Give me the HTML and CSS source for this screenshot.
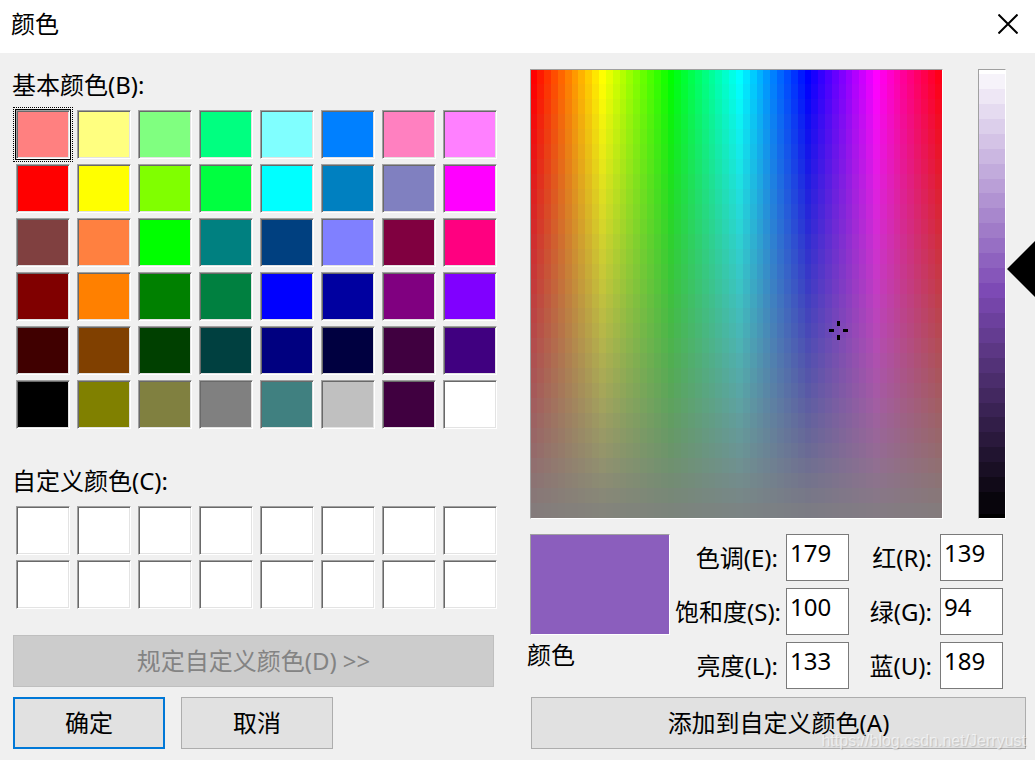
FILE: index.html
```
<!DOCTYPE html>
<html lang="zh-CN">
<head>
    <meta charset="UTF-8">
    <meta name="viewport" content="width=device-width, initial-scale=1.0">
    <title>颜色</title>
    <link rel="stylesheet" href="styles.css">
</head>
<body>

    <!-- Title bar -->
    <header class="titlebar">
        <h1 class="title">颜色</h1>
        <button type="button" class="close" aria-label="关闭">
            <svg width="20" height="20" viewBox="0 0 20 20"><path d="M0.5 0.5 L19.5 19.5 M19.5 0.5 L0.5 19.5"/></svg>
        </button>
    </header>

    <form class="dialog" onsubmit="return false">

        <!-- Left: swatches -->
        <div class="palette">
            <h2 class="caption" id="basicLabel">基本颜色(B):</h2>
            <div class="swatches" id="basicColors" role="group" aria-labelledby="basicLabel"></div>

            <h2 class="caption custom" id="customLabel">自定义颜色(C):</h2>
            <div class="swatches" id="customColors" role="group" aria-labelledby="customLabel"></div>

            <button type="button" class="btn define" disabled>规定自定义颜色(D) &gt;&gt;</button>
            <div class="actions">
                <button type="submit" class="btn primary">确定</button>
                <button type="button" class="btn">取消</button>
            </div>
        </div>

        <!-- Right: spectrum and values -->
        <div class="mixer">
            <div class="picker">
                <div class="spectrum sunken">
                    <canvas id="spectrum"></canvas>
                    <svg class="cross" width="19" height="19" viewBox="0 0 19 19"><path d="M0 8h5v3H0z M14 8h5v3h-5z M8 0h3v5H8z M8 14h3v5H8z"/></svg>
                </div>
                <div class="luminance sunken"><canvas id="luminance"></canvas></div>
                <div class="slider">
                    <svg class="arrow" width="28" height="56" viewBox="0 0 28 56"><path d="M0 28 L28 0 V56 Z"/></svg>
                </div>
            </div>

            <div class="values">
                <div class="current">
                    <div class="preview sunken"></div>
                    <span class="preview-label">颜色</span>
                </div>
                <div class="fields">
                    <label for="hue">色调(E):</label>
                    <input type="text" id="hue" value="179">
                    <label for="red">红(R):</label>
                    <input type="text" id="red" value="139">

                    <label for="sat">饱和度(S):</label>
                    <input type="text" id="sat" value="100">
                    <label for="green">绿(G):</label>
                    <input type="text" id="green" value="94">

                    <label for="lum">亮度(L):</label>
                    <input type="text" id="lum" value="133">
                    <label for="blue">蓝(U):</label>
                    <input type="text" id="blue" value="189">
                </div>
            </div>

            <div class="add-row">
                <button type="button" class="btn add">添加到自定义颜色(A)</button>
                <span class="watermark">https://blog.csdn.net/Jerryust</span>
            </div>
        </div>
    </form>

    <script src="script.js"></script>
</body>
</html>
```

FILE: styles.css
```
* {
    box-sizing: border-box;
}

body {
    margin: 0;
    min-height: 100vh;
    background: #f0f0f0;
    color: #000;
    font-family: "Noto Sans", "Noto Sans CJK SC", sans-serif;
    font-size: 24px;
    line-height: 32px;
    overflow-x: hidden;
}

button,
input {
    font: inherit;
    color: inherit;
}

/* Title bar */
.titlebar {
    display: flex;
    justify-content: space-between;
    align-items: center;
    height: 53px;
    padding: 0 12px 6px 11px;
    background: #fff;
}

.title,
.caption {
    margin: 0;
    font-size: 24px;
    font-weight: normal;
}

.close {
    display: flex;
    padding: 5px;
    border: none;
    background: none;
}

.close svg {
    fill: none;
    stroke: #000;
    stroke-width: 2;
}

/* Layout */
.dialog {
    display: flex;
    gap: 34px;
    padding: 16px 0 11px 13px;
}

.palette {
    width: 483px;
    flex: none;
}

.mixer {
    flex: 1;
    min-width: 0;
}

.caption {
    margin-left: -1px;
}

/* Swatches */
.swatches {
    display: grid;
    grid-template-columns: repeat(8, 54px);
    gap: 5px 7px;
    margin: 9px 0 0 3px;
}

.custom {
    margin-top: 36px;
}

.swatch {
    height: 49px;
    padding: 0;
    border: 1px solid;
    border-color: #a0a0a0 #fff #fff #a0a0a0;
    box-shadow: inset 1px 1px #696969, inset -1px -1px #e3e3e3;
}

.swatch.selected {
    box-shadow: inset 1px 1px #696969, inset -1px -1px #e3e3e3, 0 0 0 1px #000;
    outline: 1px dotted #000;
    outline-offset: 2px;
}

/* Buttons */
.btn {
    height: 52px;
    padding: 0;
    border: 1px solid #adadad;
    background: #e1e1e1;
}

.btn.primary {
    border: 2px solid #0078d7;
}

.btn.define {
    display: block;
    width: 481px;
    margin-top: 26px;
    border-color: #bfbfbf;
    background: #ccc;
    color: #838383;
}

.actions {
    display: flex;
    gap: 16px;
    margin-top: 10px;
}

.actions .btn {
    width: 152px;
}

/* Spectrum */
.sunken {
    border: 1px solid;
    border-color: #a0a0a0 #fff #fff #a0a0a0;
}

.picker {
    display: flex;
    height: 450px;
}

.picker canvas {
    display: block;
    width: 100%;
    height: 100%;
}

.spectrum {
    position: relative;
    flex: 1;
    min-width: 0;
    margin-right: 35px;
}

.cross {
    position: absolute;
    left: calc(74.7% - 9px);
    top: calc(58.2% - 10px);
}

.luminance {
    width: 28px;
}

.slider {
    position: relative;
    width: 29px;
}

.arrow {
    position: absolute;
    right: 0;
    top: calc(44.5% - 28px);
}

/* Values */
.values {
    display: flex;
    gap: 5px;
    margin-top: 15px;
}

.preview {
    width: 140px;
    height: 101px;
    background: #8b5ebd;
}

.preview-label {
    display: block;
    margin: 4px 0 0 -3px;
}

.fields {
    display: grid;
    grid-template-columns: 103px 63px 75px 63px;
    grid-auto-rows: 47px;
    gap: 7px 8px;
    align-items: center;
}

.fields label {
    text-align: right;
    white-space: nowrap;
}

.fields input {
    width: 63px;
    height: 47px;
    padding: 0 3px 10px;
    border: 1px solid #7a7a7a;
    border-radius: 0;
    background: #fff;
}

.add-row {
    position: relative;
    margin: 8px 9px 0 1px;
}

.btn.add {
    display: block;
    width: 100%;
}

.watermark {
    position: absolute;
    right: 0;
    bottom: -2px;
    font-family: "Liberation Sans", Arial, sans-serif;
    font-size: 16px;
    line-height: 20px;
    color: rgba(255, 255, 255, 0.6);
    text-shadow: 1px 1px 1px rgba(0, 0, 0, 0.15);
    pointer-events: none;
}
```

FILE: script.js
```
const basic = [
    "#ff8080", "#ffff80", "#80ff80", "#00ff80", "#80ffff", "#0080ff", "#ff80c0", "#ff80ff",
    "#ff0000", "#ffff00", "#80ff00", "#00ff40", "#00ffff", "#0080c0", "#8080c0", "#ff00ff",
    "#804040", "#ff8040", "#00ff00", "#008080", "#004080", "#8080ff", "#800040", "#ff0080",
    "#800000", "#ff8000", "#008000", "#008040", "#0000ff", "#0000a0", "#800080", "#8000ff",
    "#400000", "#804000", "#004000", "#004040", "#000080", "#000040", "#400040", "#400080",
    "#000000", "#808000", "#808040", "#808080", "#408080", "#c0c0c0", "#400040", "#ffffff"
];
const custom = new Array(16).fill("#ffffff");

function addSwatches(id, colors) {
    const box = document.getElementById(id);
    colors.forEach(color => {
        const b = document.createElement("button");
        b.type = "button";
        b.className = "swatch";
        b.style.background = color;
        b.setAttribute("aria-label", color);
        b.onclick = () => {
            document.querySelectorAll(".swatch.selected").forEach(s => s.classList.remove("selected"));
            b.classList.add("selected");
        };
        box.appendChild(b);
    });
}

// hue, saturation and luminance all run 0-240
function hsl(h, s, l) {
    return `hsl(${h * 1.5}, ${s / 2.4}%, ${l / 2.4}%)`;
}

function fitCanvas(id) {
    const c = document.getElementById(id);
    c.width = c.clientWidth;
    c.height = c.clientHeight;
    return c;
}

function drawSpectrum() {
    const c = fitCanvas("spectrum");
    const ctx = c.getContext("2d");
    for (let row = 0; row < 30; row++) {
        const y = Math.floor(row * c.height / 30);
        for (let col = 0; col < 60; col++) {
            const x = Math.floor(col * c.width / 60);
            ctx.fillStyle = hsl(col * 4, 240 - row * 8, 120);
            ctx.fillRect(x, y, c.width - x, c.height - y);
        }
    }
}

function drawLuminance(hue, sat) {
    const c = fitCanvas("luminance");
    const ctx = c.getContext("2d");
    // half bands of white and black at the ends
    for (let i = 0; i < 30; i++) {
        const y = i ? Math.floor((i - 0.7) * c.height / 30) : 0;
        ctx.fillStyle = hsl(hue, sat, 240 - i * 8);
        ctx.fillRect(0, y, c.width, c.height - y);
    }
    ctx.fillStyle = "#000";
    ctx.fillRect(0, c.height - 4, c.width, 4);
}

function draw() {
    drawSpectrum();
    drawLuminance(179, 100);
}

addSwatches("basicColors", basic);
addSwatches("customColors", custom);
document.querySelector(".swatch").classList.add("selected");
draw();
window.addEventListener("resize", draw);
```
